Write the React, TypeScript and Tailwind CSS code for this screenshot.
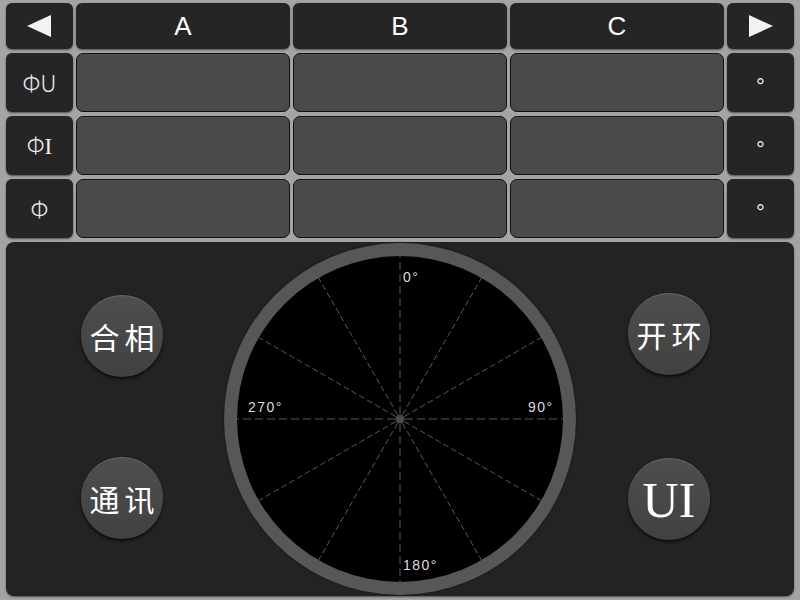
import React from "react";

const sans = { fontFamily: '"Liberation Sans", "Noto Sans CJK SC", sans-serif' };
const cjk = { fontFamily: '"Noto Sans CJK SC", "Noto Sans", sans-serif' };

function Triangle({ dir }: { dir: "left" | "right" }) {
  return (
    <svg width="25" height="22" viewBox="0 0 25 22">
      <polygon
        points={dir === "left" ? "0,11 24,0 24,22" : "1,0 25,11 1,22"}
        fill="#f2f2f2"
      />
    </svg>
  );
}

function HeadCell({ children }: { children: React.ReactNode }) {
  return (
    <div className="flex items-center justify-center rounded-[6px] bg-[#252525] text-white shadow-[0_1px_2px_rgba(0,0,0,0.5)]">
      {children}
    </div>
  );
}

function ValueCell() {
  return (
    <div className="rounded-[7px] border border-[#111] bg-[#4a4a4a] shadow-[inset_0_1px_0_rgba(255,255,255,0.04)]" />
  );
}

function RoundButton({ children, serif }: { children: React.ReactNode; serif?: boolean }) {
  return (
    <button
      className="flex h-[82px] w-[82px] items-center justify-center rounded-full border-t border-[#6a6a6a] bg-[linear-gradient(180deg,#4e4e4e,#414141)] text-white shadow-[0_2px_3px_rgba(0,0,0,0.7)]"
      style={serif ? { fontFamily: '"Liberation Serif", serif' } : cjk}
    >
      {serif ? (
        <span className="text-[50px] leading-none">{children}</span>
      ) : (
        <span className="pb-[2px] pl-[5px] text-[30px] leading-none tracking-[5px]">{children}</span>
      )}
    </button>
  );
}

function PhaseDial() {
  const c = 163;
  const angles = Array.from({ length: 12 }, (_, i) => i * 30);
  return (
    <div className="h-[352px] w-[352px] rounded-full bg-[#575757] p-[13px] shadow-[0_0_2px_rgba(0,0,0,0.6)]">
      <svg width="326" height="326" viewBox="0 0 326 326" className="rounded-full bg-black">
        {angles.map((a) => {
          const r = (a * Math.PI) / 180;
          return (
            <line
              key={a}
              x1={c + 5 * Math.sin(r)}
              y1={c - 5 * Math.cos(r)}
              x2={c + 163 * Math.sin(r)}
              y2={c - 163 * Math.cos(r)}
              stroke="#5a5a5a"
              strokeWidth="1"
              strokeDasharray={a % 90 === 0 ? "8 4" : "6 3"}
            />
          );
        })}
        <circle cx={c} cy={c} r="4.5" fill="#4a4a4a" />
        <g fill="#dcdcdc" fontSize="14" letterSpacing="1.5" style={sans}>
          <text x="166" y="26">0°</text>
          <text x="291" y="156">90°</text>
          <text x="11" y="156">270°</text>
          <text x="166" y="314">180°</text>
        </g>
      </svg>
    </div>
  );
}

export default function App() {
  const rows = [
    { label: <>ΦU</> },
    { label: <>Φ<span style={{ fontFamily: '"Liberation Serif", serif' }}>I</span></> },
    { label: <>Φ</> },
  ];

  return (
    <div className="h-[600px] w-[800px] overflow-hidden bg-[#a4a4a4] px-[6px] pt-[3px]" style={sans}>
      <div className="grid grid-cols-[67px_214px_214px_214px_67px] grid-rows-[46px_59px_59px_59px] gap-x-[3px] gap-y-[4px]">
        <HeadCell>
          <Triangle dir="left" />
        </HeadCell>
        {["A", "B", "C"].map((t) => (
          <HeadCell key={t}>
            <span className="text-[26px]">{t}</span>
          </HeadCell>
        ))}
        <HeadCell>
          <Triangle dir="right" />
        </HeadCell>

        {rows.map((row, i) => (
          <React.Fragment key={i}>
            <HeadCell>
              <span className="text-[23px] font-light text-[#eee]" style={cjk}>
                {row.label}
              </span>
            </HeadCell>
            <ValueCell />
            <ValueCell />
            <ValueCell />
            <HeadCell>
              <span className="pt-[8px] text-[22px] text-[#eee]">°</span>
            </HeadCell>
          </React.Fragment>
        ))}
      </div>

      <div className="mt-[4px] flex h-[354px] items-center rounded-[8px] bg-[#232323] shadow-[0_1px_2px_rgba(0,0,0,0.5)]">
        <div className="flex h-full w-[218px] flex-col gap-[80px] pl-[75px] pt-[53px]">
          <RoundButton>合相</RoundButton>
          <RoundButton>通讯</RoundButton>
        </div>
        <PhaseDial />
        <div className="flex h-full w-[218px] flex-col gap-[83px] pl-[52px] pt-[51px]">
          <RoundButton>开环</RoundButton>
          <RoundButton serif>UI</RoundButton>
        </div>
      </div>
    </div>
  );
}
